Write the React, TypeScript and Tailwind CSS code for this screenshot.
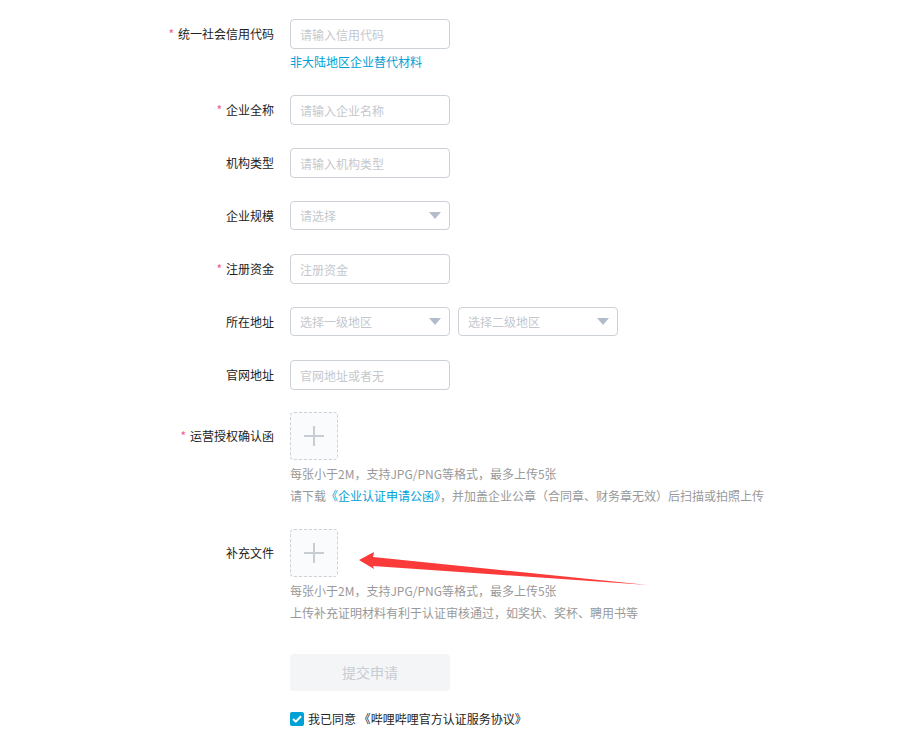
import type { ReactNode } from 'react'

const font = { fontFamily: '"Noto Sans CJK SC", "Noto Sans", sans-serif' }

function Row({ label, required, children, align = 'center' }: { label: string; required?: boolean; children: ReactNode; align?: 'center' | 'top' }) {
  return (
    <div className="flex">
      <div className={`flex w-[274px] shrink-0 justify-end text-[12px] text-[#222] ${align === 'center' ? 'h-[30px] items-center' : 'h-[48px] items-center'}`}>
        {required && <span className="mr-[4px] text-[#f45a8d]">*</span>}
        {label}
      </div>
      <div className="ml-[16px]">{children}</div>
    </div>
  )
}

function Input({ placeholder }: { placeholder: string }) {
  return (
    <input
      placeholder={placeholder}
      className="h-[30px] w-[160px] rounded-[4px] border border-[#ccd0d7] px-[9px] text-[12px] outline-none placeholder:text-[#c4c8ce]"
    />
  )
}

function Select({ placeholder }: { placeholder: string }) {
  return (
    <div className="flex h-[29px] w-[160px] items-center justify-between rounded-[4px] border border-[#ccd0d7] pl-[9px] pr-[8px] text-[12px] text-[#c4c8ce]">
      <span>{placeholder}</span>
      <svg width="12" height="7" viewBox="0 0 12 7">
        <path d="M0 0h12L6 7z" fill="#b4bccc" />
      </svg>
    </div>
  )
}

function Upload() {
  return (
    <div className="flex h-[48px] w-[48px] items-center justify-center rounded-[4px] border border-dashed border-[#ccd0d7] bg-[#fafbfc]">
      <svg width="20" height="20" viewBox="0 0 20 20">
        <path d="M9 0h2v20H9zM0 9h20v2H0z" fill="#c8ccd3" />
      </svg>
    </div>
  )
}

export default function App() {
  return (
    <div className="relative min-h-[743px] w-[906px] bg-white pt-[19px]" style={font}>
      <div className="flex flex-col">
        <Row label="统一社会信用代码" required>
          <Input placeholder="请输入信用代码" />
          <p className="mt-[3px] text-[12px] leading-[20px] text-[#00a1d6]">非大陆地区企业替代材料</p>
        </Row>
        <div className="mt-[23px] flex flex-col gap-[23px]">
          <Row label="企业全称" required>
            <Input placeholder="请输入企业名称" />
          </Row>
          <Row label="机构类型">
            <Input placeholder="请输入机构类型" />
          </Row>
          <Row label="企业规模">
            <Select placeholder="请选择" />
          </Row>
          <Row label="注册资金" required>
            <Input placeholder="注册资金" />
          </Row>
          <Row label="所在地址">
            <div className="flex gap-[8px]">
              <Select placeholder="选择一级地区" />
              <Select placeholder="选择二级地区" />
            </div>
          </Row>
          <Row label="官网地址">
            <Input placeholder="官网地址或者无" />
          </Row>
        </div>
        <div className="mt-[22px]">
          <Row label="运营授权确认函" required align="top">
            <Upload />
            <div className="mt-[3px] text-[12px] leading-[22px] text-[#999]">
              <p>每张小于2M，支持JPG/PNG等格式，最多上传5张</p>
              <p>
                请下载<span className="text-[#00a1d6]">《企业认证申请公函》</span>，并加盖企业公章（合同章、财务章无效）后扫描或拍照上传
              </p>
            </div>
          </Row>
        </div>
        <div className="mt-[22px]">
          <Row label="补充文件" align="top">
            <Upload />
            <div className="mt-[3px] text-[12px] leading-[22px] text-[#999]">
              <p>每张小于2M，支持JPG/PNG等格式，最多上传5张</p>
              <p>上传补充证明材料有利于认证审核通过，如奖状、奖杯、聘用书等</p>
            </div>
          </Row>
        </div>
        <div className="ml-[290px] mt-[30px]">
          <button type="button" className="h-[37px] w-[160px] rounded-[4px] bg-[#f4f5f7] text-[14px] text-[#c8ccd3]">
            提交申请
          </button>
          <label className="mt-[19px] flex items-center text-[12px] text-[#222]">
            <span className="mr-[4px] flex h-[14px] w-[14px] items-center justify-center rounded-[2px] bg-[#00a1d6]">
              <svg width="10" height="8" viewBox="0 0 10 8">
                <path d="M1 4l2.8 2.6L9 1.2" fill="none" stroke="#fff" strokeWidth="2" />
              </svg>
            </span>
            我已同意 《哔哩哔哩官方认证服务协议》
          </label>
        </div>
      </div>
      <svg className="pointer-events-none absolute left-0 top-0" width="906" height="743">
        <polygon points="359,560 374,552 373,557 648,585 373,566 374,569" fill="#fb3a3a" />
      </svg>
    </div>
  )
}
